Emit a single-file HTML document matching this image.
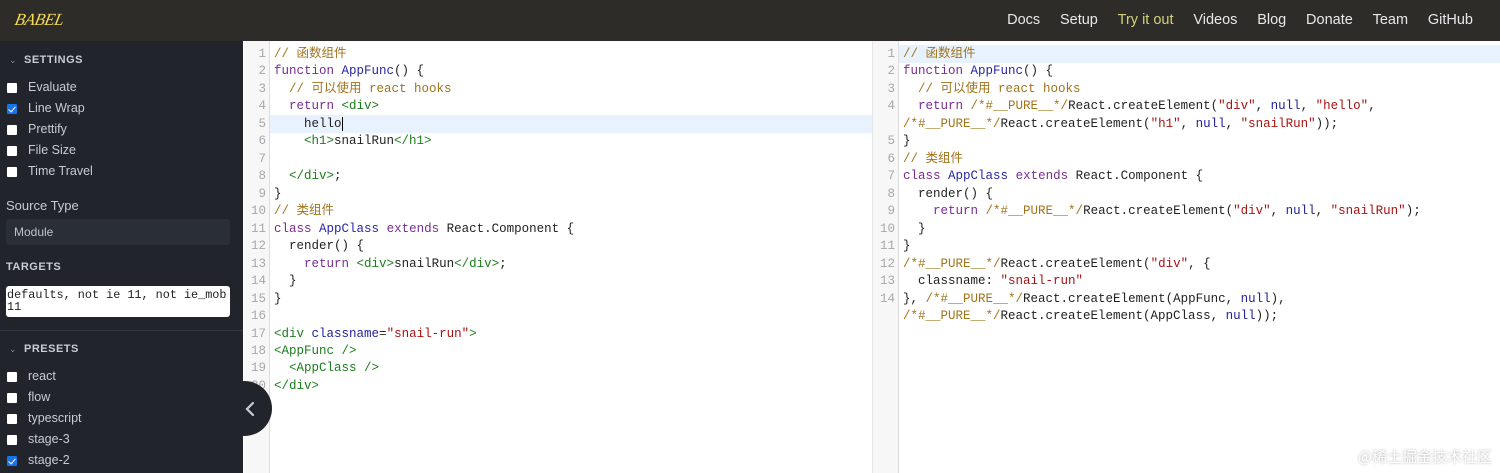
<!DOCTYPE html>
<html><head><meta charset="utf-8"><style>
*{margin:0;padding:0;box-sizing:border-box}
body{width:1500px;height:473px;overflow:hidden;background:#fff;font-family:"Liberation Sans",sans-serif;position:relative}
.nav{position:absolute;left:0;top:0;width:1500px;height:41px;background:#2d2c29}
.logo{position:absolute;left:15px;top:10px;color:#f5da55;font:italic 17px "Liberation Serif",serif;letter-spacing:-0.5px;transform:skewX(-12deg)}
.links{position:absolute;right:27px;top:12px;font-size:14.5px;color:#e8e8e8;word-spacing:0}
.links span{margin-left:19.8px}
.side{position:absolute;left:0;top:41px;width:243px;height:432px;background:#21242a;color:#c8ccd2;font-size:12.5px}
.hdr{position:absolute;left:24px;font-weight:bold;font-size:11px;letter-spacing:.5px;color:#c9ccd0}
.chev{position:absolute;left:9px;color:#8a8f96;font-size:9px}
.cb{position:absolute;left:7px;width:10px;height:10px;background:#fff;border-radius:1px}
.cb.on{background:#1a73e8}
.cb.on:after{content:"";position:absolute;left:3px;top:1px;width:3px;height:6px;border:solid #fff;border-width:0 1.5px 1.5px 0;transform:rotate(40deg)}
.lbl{position:absolute;left:28px}
.sel{position:absolute;left:6px;top:178px;width:224px;height:26px;background:#2a2e35;border-radius:3px;padding:6px 8px;font-size:12px;color:#bfc3c8}
.ta{position:absolute;left:6px;top:245px;width:224px;height:31px;background:#fff;border-radius:3px;color:#222;font:11.8px "Liberation Mono",monospace;line-height:12px;padding:3px 1px;white-space:pre}
.sep{position:absolute;left:0;top:289px;width:243px;height:1px;background:#32363d}
.code{position:absolute;top:46px;font:12.5px/17.47px "Liberation Mono","Noto Sans CJK SC",monospace;white-space:pre;color:#222}
.gut{position:absolute;top:41px;height:432px;background:#f7f7f7;border-right:1px solid #ddd}
.ln{position:absolute;top:46px;font:12.5px/17.47px "Liberation Mono",monospace;color:#a8a8a8;text-align:right;white-space:pre}
.c{color:#a0741b}.k{color:#7a2b91}.d{color:#2727a8}.s{color:#a11}.t{color:#1b7d1b}.n{color:#22229a}
.circle{position:absolute;left:217px;top:381px;width:55px;height:55px;border-radius:50%;background:#21242a}
</style></head><body>
<div class="nav"><div class="logo">BABEL</div>
<div class="links"><span>Docs</span><span>Setup</span><span style="color:#d4d17a">Try it out</span><span>Videos</span><span>Blog</span><span>Donate</span><span>Team</span><span>GitHub</span></div></div>

<div style="position:absolute;left:244px;top:115px;width:628px;height:17.5px;background:#e8f2ff"></div>
<div style="position:absolute;left:898px;top:45px;width:602px;height:17.5px;background:#e8f2ff"></div>
<div class="gut" style="left:244px;width:26px"></div>
<div class="gut" style="left:872px;width:27px;border-left:1px solid #e6e6e6"></div>
<div class="ln" style="left:244px;width:22px">1
2
3
4
5
6
7
8
9
10
11
12
13
14
15
16
17
18
19
20</div>
<div class="code" style="left:274px"><span class="c">// 函数组件</span>
<span class="k">function</span> <span class="d">AppFunc</span>() {
  <span class="c">// 可以使用 react hooks</span>
  <span class="k">return</span> <span class="t">&lt;div&gt;</span>
    hello<span style="border-left:1px solid #000"></span>
    <span class="t">&lt;h1&gt;</span>snailRun<span class="t">&lt;/h1&gt;</span>

  <span class="t">&lt;/div&gt;</span>;
}
<span class="c">// 类组件</span>
<span class="k">class</span> <span class="d">AppClass</span> <span class="k">extends</span> React.Component {
  render() {
    <span class="k">return</span> <span class="t">&lt;div&gt;</span>snailRun<span class="t">&lt;/div&gt;</span>;
  }
}

<span class="t">&lt;div</span> <span class="n">classname</span>=<span class="s">"snail-run"</span><span class="t">&gt;</span>
<span class="t">&lt;AppFunc /&gt;</span>
  <span class="t">&lt;AppClass /&gt;</span>
<span class="t">&lt;/div&gt;</span></div>

<div class="ln" style="left:872px;width:23px">1
2
3
4

5
6
7
8
9
10
11
12
13
14</div>
<div class="code" style="left:903px"><span class="c">// 函数组件</span>
<span class="k">function</span> <span class="d">AppFunc</span>() {
  <span class="c">// 可以使用 react hooks</span>
  <span class="k">return</span> <span class="c">/*#__PURE__*/</span>React.createElement(<span class="s">"div"</span>, <span class="n">null</span>, <span class="s">"hello"</span>,
<span class="c">/*#__PURE__*/</span>React.createElement(<span class="s">"h1"</span>, <span class="n">null</span>, <span class="s">"snailRun"</span>));
}
<span class="c">// 类组件</span>
<span class="k">class</span> <span class="d">AppClass</span> <span class="k">extends</span> React.Component {
  render() {
    <span class="k">return</span> <span class="c">/*#__PURE__*/</span>React.createElement(<span class="s">"div"</span>, <span class="n">null</span>, <span class="s">"snailRun"</span>);
  }
}
<span class="c">/*#__PURE__*/</span>React.createElement(<span class="s">"div"</span>, {
  classname: <span class="s">"snail-run"</span>
}, <span class="c">/*#__PURE__*/</span>React.createElement(AppFunc, <span class="n">null</span>),
<span class="c">/*#__PURE__*/</span>React.createElement(AppClass, <span class="n">null</span>));</div>

<div class="circle"><svg width="55" height="55" style="position:absolute;left:0;top:0"><path d="M36 22 L30 28 L36 34" fill="none" stroke="#c9ccd0" stroke-width="2.2" stroke-linecap="round"/></svg></div>

<div class="side">
<span class="chev" style="top:14px">&#8964;</span><span class="hdr" style="top:13px">SETTINGS</span>
<div class="cb" style="top:42px"></div><span class="lbl" style="top:39px">Evaluate</span>
<div class="cb on" style="top:63px"></div><span class="lbl" style="top:60px">Line Wrap</span>
<div class="cb" style="top:84px"></div><span class="lbl" style="top:81px">Prettify</span>
<div class="cb" style="top:105px"></div><span class="lbl" style="top:102px">File Size</span>
<div class="cb" style="top:126px"></div><span class="lbl" style="top:123px">Time Travel</span>
<span style="position:absolute;left:6px;top:157px;font-size:13px">Source Type</span>
<div class="sel">Module</div>
<span class="hdr" style="left:6px;top:220px">TARGETS</span>
<div class="ta">defaults, not ie 11, not ie_mob
11</div>
<div class="sep"></div>
<span class="chev" style="top:303px">&#8964;</span><span class="hdr" style="top:302px">PRESETS</span>
<div class="cb" style="top:331px"></div><span class="lbl" style="top:328px">react</span>
<div class="cb" style="top:352px"></div><span class="lbl" style="top:349px">flow</span>
<div class="cb" style="top:373px"></div><span class="lbl" style="top:370px">typescript</span>
<div class="cb" style="top:394px"></div><span class="lbl" style="top:391px">stage-3</span>
<div class="cb on" style="top:415px"></div><span class="lbl" style="top:412px">stage-2</span>
</div>
<div style="position:absolute;right:8px;bottom:6px;color:#fff;font:15px 'Noto Sans CJK SC',sans-serif;text-shadow:0 0 2px #999;opacity:.85">@稀土掘金技术社区</div>
</body></html>
